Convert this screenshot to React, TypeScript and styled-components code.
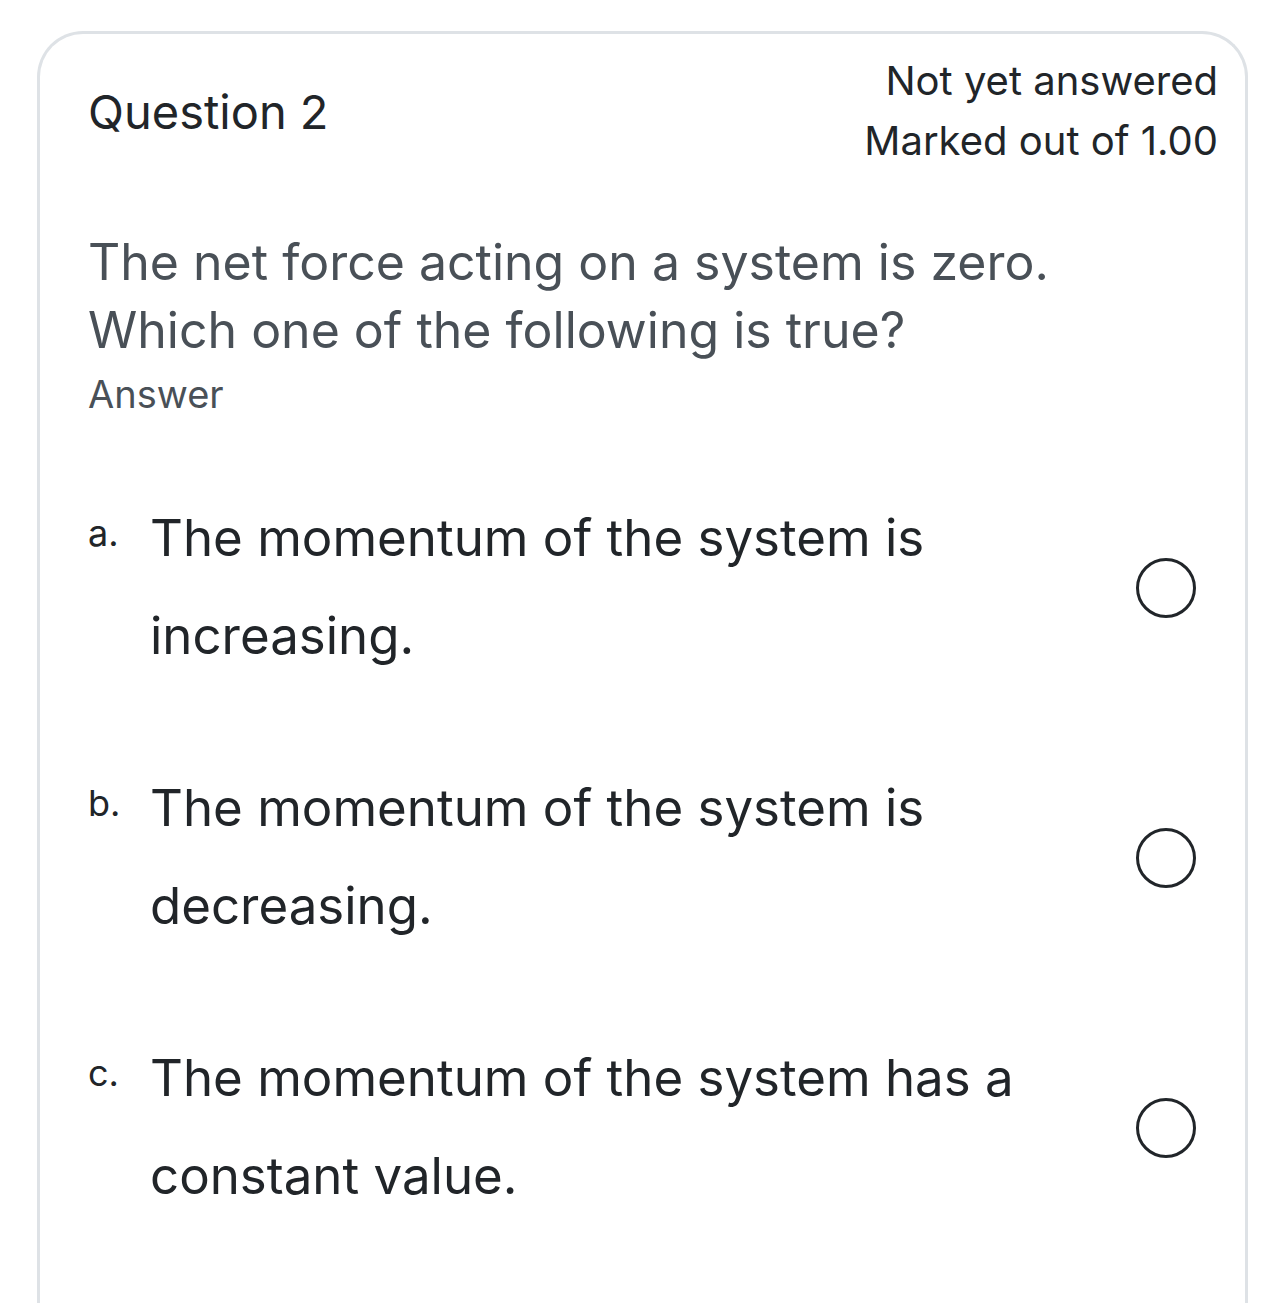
import styled, { createGlobalStyle } from 'styled-components';

const GlobalStyle = createGlobalStyle`
  html, body {
    margin: 0;
    padding: 0;
    background: #ffffff;
  }
  body {
    font-family: Inter, "Noto Sans", "Liberation Sans", sans-serif;
    color: #212529;
    overflow: hidden;
  }
`;

const Page = styled.div`
  padding: 31px 36px 0 37px;
  height: 1303px;
  box-sizing: border-box;
`;

const Card = styled.div`
  border: 3px solid #dee2e6;
  border-bottom: none;
  border-radius: 46px 46px 0 0;
  min-height: 1400px;
  padding: 17px 27px 0 48px;
  box-sizing: border-box;
`;

const Header = styled.div`
  display: flex;
  justify-content: space-between;
  align-items: center;
`;

const Title = styled.h3`
  margin: 0;
  font-size: 47px;
  font-weight: 400;
  color: #212529;
`;

const State = styled.div`
  text-align: right;
  font-size: 40px;
  line-height: 60px;
  color: #212529;
`;

const QuestionText = styled.div`
  margin-top: 57px;
  font-size: 50px;
  line-height: 68px;
  color: #495057;
`;

const AnswerLabel = styled.div`
  font-size: 38px;
  line-height: 56px;
  margin-top: 2px;
  color: #495057;
`;

const Options = styled.div`
  margin-top: 81px;
  display: flex;
  flex-direction: column;
  gap: 88px;
`;

const Option = styled.label`
  display: flex;
  align-items: center;
  padding-right: 22px;
`;

const Body = styled.div`
  display: flex;
  align-items: flex-start;
  flex: 1;
`;

const Letter = styled.span`
  font-size: 36px;
  line-height: 60px;
  width: 62px;
  flex: none;
  color: #212529;
`;

const OptionText = styled.div`
  font-size: 51px;
  line-height: 98px;
  margin-top: -14px;
  color: #212529;
  max-width: 880px;
`;

const Radio = styled.span`
  width: 60px;
  height: 60px;
  box-sizing: border-box;
  margin-top: -12px;
  border: 3px solid #212529;
  border-radius: 50%;
  flex: none;
`;

const options = [
  { letter: 'a.', lines: ['The momentum of the system is', 'increasing.'] },
  { letter: 'b.', lines: ['The momentum of the system is', 'decreasing.'] },
  { letter: 'c.', lines: ['The momentum of the system has a', 'constant value.'] },
];

export default function App() {
  return (
    <>
      <GlobalStyle />
      <Page>
        <Card>
          <Header>
            <Title>Question 2</Title>
            <State>
              <div>Not yet answered</div>
              <div>Marked out of 1.00</div>
            </State>
          </Header>
          <QuestionText>
            The net force acting on a system is zero.
            <br />
            Which one of the following is true?
          </QuestionText>
          <AnswerLabel>Answer</AnswerLabel>
          <Options>
            {options.map(o => (
              <Option key={o.letter}>
                <Body>
                  <Letter>{o.letter}</Letter>
                  <OptionText>
                    {o.lines.map(l => (
                      <div key={l}>{l}</div>
                    ))}
                  </OptionText>
                </Body>
                <Radio />
              </Option>
            ))}
          </Options>
        </Card>
      </Page>
    </>
  );
}
